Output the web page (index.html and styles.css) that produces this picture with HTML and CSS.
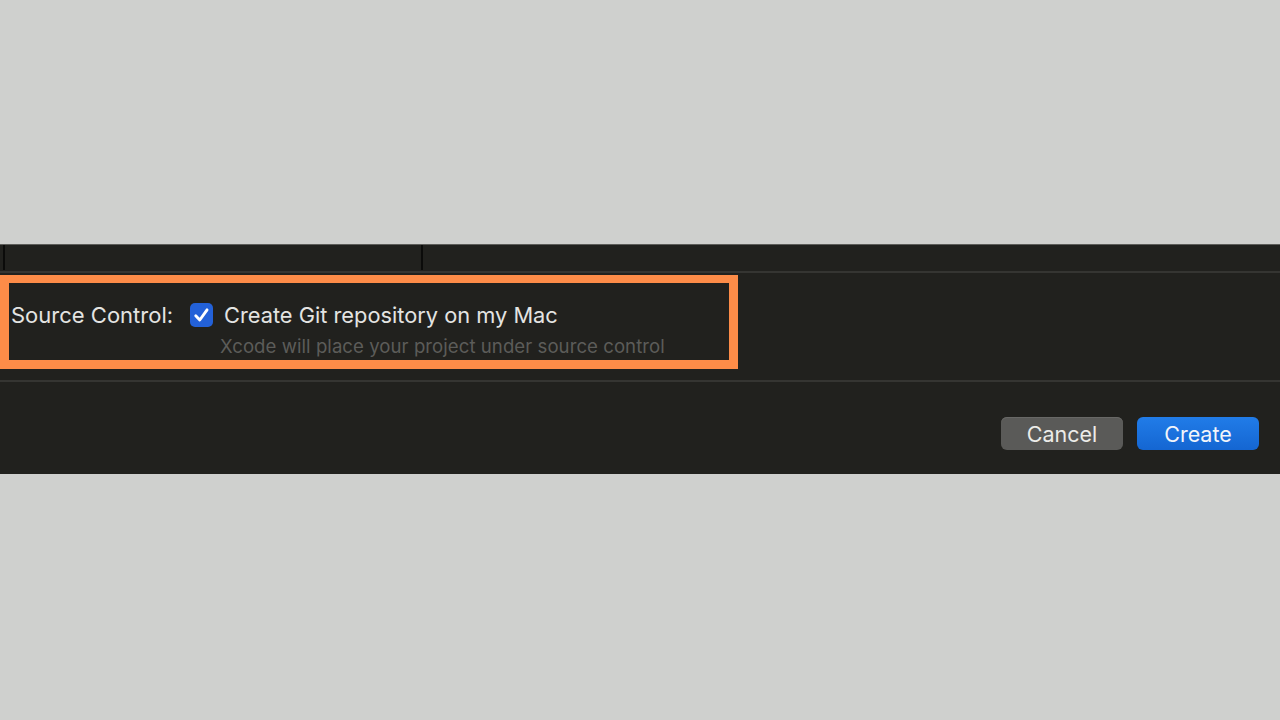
FILE: index.html
```html
<!DOCTYPE html>
<html>
<head>
<meta charset="utf-8">
<link rel="stylesheet" href="styles.css">
</head>
<body>
<div class="backdrop"></div>
<div class="panel">
  <div class="toolbar"><div class="field"></div></div>
  <div class="rule"></div>
  <div class="highlight">
    <div class="row">
      <div class="label">Source Control:</div>
      <div class="option">
        <div class="check-line">
          <span class="checkbox">
            <svg viewBox="0 0 24 24" width="24" height="24"><path d="M6 12.8 L10.2 17.2 L17.8 6.6" fill="none" stroke="#fff" stroke-width="3" stroke-linecap="round" stroke-linejoin="round"/></svg>
          </span>
          <span class="check-text">Create Git repository on my Mac</span>
        </div>
        <div class="hint">Xcode will place your project under source control</div>
      </div>
    </div>
  </div>
  <div class="rule lower"></div>
  <div class="footer">
    <button class="btn cancel">Cancel</button>
    <button class="btn create">Create</button>
  </div>
</div>
</body>
</html>
```

FILE: styles.css
```css
html, body {
  margin: 0;
  padding: 0;
  background: #cfd0ce;
  font-family: Inter, "Open Sans", "Liberation Sans", sans-serif;
}
.backdrop {
  height: 244px;
}
.panel {
  background: #21211e;
  border-top: 1px solid #5d5d5a;
  height: 229px;
  display: flex;
  flex-direction: column;
}
.toolbar {
  height: 26px;
  display: flex;
}
.field {
  margin-left: 3px;
  width: 416px;
  height: 25px;
  border-left: 2px solid #0b0b0a;
  border-right: 2px solid #0b0b0a;
}
.rule {
  height: 2px;
  background: #353532;
}
.highlight {
  margin-top: 2px;
  width: 720px;
  height: 77px;
  border-style: solid;
  border-color: #fd8c48;
  border-width: 8px 9px 9px 9px;
  box-sizing: content-box;
}
.row {
  display: flex;
  align-items: flex-start;
  padding-top: 19px;
  padding-left: 2px;
}
.label {
  color: #e4e4e2;
  font-size: 22px;
  line-height: 26px;
  width: 179px;
}
.check-line {
  display: flex;
  align-items: center;
}
.checkbox {
  width: 23px;
  height: 24px;
  border-radius: 5px;
  background: #2361d8;
  display: flex;
  align-items: center;
  justify-content: center;
  margin-right: 11px;
}
.check-text {
  color: #e4e4e2;
  font-size: 21.8px;
  line-height: 26px;
}
.hint {
  color: #5c5c59;
  font-size: 18.6px;
  line-height: 22px;
  margin-left: 30px;
  margin-top: 7px;
  letter-spacing: 0.05px;
}
.lower {
  margin-top: 11px;
  height: 2px;
}
.footer {
  flex: 1;
  display: flex;
  justify-content: flex-end;
  align-items: flex-start;
  padding-top: 35px;
  padding-right: 21px;
  gap: 14px;
}
.btn {
  width: 122px;
  height: 33px;
  border: none;
  border-radius: 6px;
  font-family: Inter, "Open Sans", "Liberation Sans", sans-serif;
  font-size: 21.5px;
  color: #ecece9;
  padding: 0;
}
.cancel {
  background: #5a5a58;
  box-shadow: inset 0 1px 0 #686866;
}
.create {
  background: linear-gradient(#217ce8, #1466d2);
  color: #f2f5fa;
}
```
